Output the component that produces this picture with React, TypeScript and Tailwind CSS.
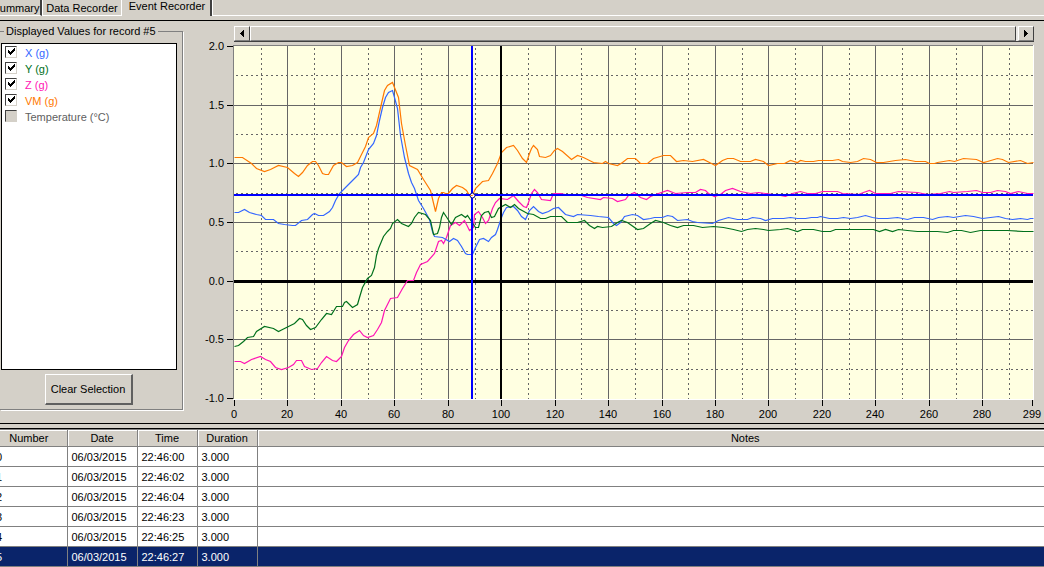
import { useState } from 'react'

const channels = [
  { id: 'x', label: 'X (g)', color: 'text-[#3366ff]', disabled: false },
  { id: 'y', label: 'Y (g)', color: 'text-[#00701c]', disabled: false },
  { id: 'z', label: 'Z (g)', color: 'text-[#ff14b4]', disabled: false },
  { id: 'vm', label: 'VM (g)', color: 'text-[#ff7800]', disabled: false },
  { id: 'temp', label: 'Temperature (°C)', color: 'text-[#606060]', disabled: true },
]

const records = [
  { number: '0', date: '06/03/2015', time: '22:46:00', duration: '3.000' },
  { number: '1', date: '06/03/2015', time: '22:46:02', duration: '3.000' },
  { number: '2', date: '06/03/2015', time: '22:46:04', duration: '3.000' },
  { number: '3', date: '06/03/2015', time: '22:46:23', duration: '3.000' },
  { number: '4', date: '06/03/2015', time: '22:46:25', duration: '3.000' },
  { number: '5', date: '06/03/2015', time: '22:46:27', duration: '3.000' },
]

// curves in plot units, 799 wide and 353 high
const curves = [
  {
    id: 'z',
    stroke: '#ff14b4',
    points:
      '0,315 6,315 10,317 17,313 26,310 31,313 36,315 41,321 47,323 54,321 59,318 62,314 67,314 70,320 77,323 83,322 87,316 92,310 98,314 102,315 107,310 110,301 114,294 119,288 125,284 129,289 133,291 139,289 143,283 147,276 150,264 156,252 163,251 168,242 173,234 179,234 182,226 186,218 193,215 200,207 204,195 207,194 209,197 212,191 216,179 221,176 225,179 230,174 233,180 235,184 239,181 240,168 244,165 248,171 251,177 254,174 258,162 261,156 265,152 273,153 279,149 284,155 289,160 292,161 294,156 297,147 300,143 303,146 307,153 316,154 319,147 326,147 336,149 344,148 353,151 366,153 369,151 378,152 383,155 391,153 394,149 400,146 406,151 412,153 416,150 424,147 433,144 441,147 453,146 461,146 466,143 471,144 474,147 480,150 486,148 491,144 498,142 506,145 516,147 524,146 531,147 546,149 551,150 558,147 566,145 573,147 581,147 588,145 603,145 608,147 624,148 629,146 635,144 641,147 656,147 664,145 683,146 693,148 706,147 715,145 719,146 733,145 742,144 748,146 756,146 763,144 771,145 776,147 784,145 793,147 799,147',
  },
  {
    id: 'x',
    stroke: '#3366ff',
    points:
      '0,166 4,166 10,163 15,166 22,168 27,169 31,173 39,173 44,177 50,178 58,179 61,179 67,174 73,173 78,168 80,167 84,169 89,169 95,165 98,161 101,154 105,147 113,139 121,131 124,128 126,121 129,116 134,103 139,97 142,89 145,74 148,61 151,51 154,46 158,44 160,51 163,62 166,89 170,111 174,127 177,136 180,142 184,154 189,162 195,173 198,185 200,190 208,191 215,195 219,192 223,194 227,200 231,207 233,208 238,208 241,201 245,193 249,192 254,195 257,191 261,188 263,183 267,171 269,166 272,161 279,160 283,164 287,170 291,173 295,164 299,160 304,165 308,167 314,165 319,162 324,161 331,168 339,170 343,168 356,169 364,170 374,171 379,177 382,179 386,176 390,170 398,168 403,169 409,173 416,172 420,171 428,171 433,169 438,170 443,174 453,173 458,175 463,176 478,177 484,174 494,171 503,173 513,173 518,171 526,172 531,174 538,172 549,172 556,171 563,172 571,172 577,171 583,171 586,170 595,172 603,172 609,171 616,172 623,171 631,169 638,171 644,172 653,172 663,171 673,173 680,171 689,171 698,173 704,171 713,170 719,171 731,169 739,170 748,172 756,171 764,170 771,172 778,173 786,172 793,173 796,172 799,172',
  },
  {
    id: 'y',
    stroke: '#00701c',
    points:
      '0,300 4,299 9,295 13,291 19,290 22,285 30,280 39,282 44,285 48,283 54,280 60,277 65,272 68,273 72,279 76,283 81,281 87,273 92,267 97,268 102,260 108,260 110,256 112,255 118,261 123,258 125,251 128,241 133,232 137,229 140,221 142,209 144,202 149,190 153,185 156,182 158,177 163,173 167,177 174,180 177,177 180,171 184,166 191,168 196,174 199,188 203,187 205,181 207,171 209,166 213,172 217,178 221,171 227,168 231,171 233,169 237,175 241,181 244,181 247,169 250,166 254,165 257,171 260,170 264,162 271,158 276,161 280,158 284,162 293,167 299,168 306,172 311,172 316,170 327,170 333,176 343,176 350,174 355,179 360,182 363,180 368,181 377,180 383,176 387,174 393,176 403,183 409,182 416,177 421,174 429,176 436,179 443,181 449,179 459,179 468,181 479,180 489,181 499,183 507,185 513,183 521,182 529,183 534,184 546,183 553,182 563,185 568,183 579,183 588,185 596,185 601,183 609,183 616,183 628,183 639,183 645,185 651,183 658,185 664,183 673,184 683,185 703,185 713,186 719,184 727,184 736,186 746,184 773,184 789,185 799,185',
  },
  {
    id: 'vm',
    stroke: '#ff7800',
    points:
      '0,111 8,111 17,117 22,122 30,125 36,123 44,119 53,121 60,127 64,130 68,126 73,119 78,115 81,115 84,119 88,127 91,128 94,128 99,119 104,116 107,116 112,120 118,119 123,116 126,110 131,100 134,91 139,87 142,79 147,57 150,44 153,39 158,36 160,41 164,51 167,77 171,99 175,119 183,123 189,133 196,144 201,165 204,152 207,146 209,146 213,148 218,142 222,139 228,141 232,144 235,149 238,149 241,142 248,135 254,134 258,127 263,117 267,106 272,101 279,99 283,104 288,112 292,116 295,107 297,102 299,99 303,103 305,110 311,111 316,109 320,104 323,102 328,105 337,113 343,109 349,111 359,116 368,117 371,115 374,117 383,119 388,116 393,112 401,112 406,117 413,117 419,112 429,109 436,109 442,115 449,114 458,115 469,113 475,116 481,119 488,114 493,112 499,112 506,115 516,115 521,113 529,115 534,119 543,117 550,117 556,114 563,116 566,114 571,115 579,115 584,114 598,114 604,113 608,115 616,116 623,115 629,112 636,113 642,116 649,116 661,114 671,113 681,115 691,115 695,117 700,117 703,116 715,114 720,115 729,112 742,113 749,116 753,115 763,112 768,113 774,116 786,114 793,117 799,116',
  },
]

const PLOT_W = 799
const PLOT_H = 353
const xTicks = [0, 20, 40, 60, 80, 100, 120, 140, 160, 180, 200, 220, 240, 260, 280, 299]
const xMinor = [10, 30, 50, 70, 90, 110, 130, 150, 170, 190, 210, 230, 250, 270, 290]
const yTicks = [2, 1.5, 1, 0.5, 0, -0.5, -1]
const yMinor = [1.75, 1.25, 0.75, 0.25, -0.25, -0.75]

const toX = (sample: number) => Math.round((sample * PLOT_W) / 299)
const toY = (g: number) => Math.round(((2 - g) * 352) / 3)

const EventChart = ({ visible }: { visible: string[] }) => {
  return (
    <svg
      viewBox="0 0 861 381"
      className="block w-full text-[11px]"
      role="img"
      aria-label="Acceleration in g by sample"
    >
      <g transform="translate(51 4)">
        <g shapeRendering="crispEdges">
          <rect x="-1" y="-1" width="801" height="355" fill="#fff" />
          <rect x="-1" y="-1" width="800" height="354" fill="#808080" />
          <rect x="0" y="0" width={PLOT_W} height={PLOT_H} fill="#ffffe1" />

          {yMinor.map((g) => (
            <path
              key={g}
              d={`M2 ${toY(g) + 0.5}H${PLOT_W}`}
              stroke="#666"
              strokeDasharray="2 3"
            />
          ))}
          {xMinor.map((s) => (
            <path
              key={s}
              d={`M${toX(s) + 0.5} 2V${PLOT_H}`}
              stroke="#666"
              strokeDasharray="2 3"
            />
          ))}
          {yTicks.slice(1, -1).map((g) => (
            <path key={g} d={`M0 ${toY(g) + 0.5}H${PLOT_W}`} stroke="#666" />
          ))}
          {xTicks.slice(1, -1).map((s) => (
            <path key={s} d={`M${toX(s) + 0.5} 0V${PLOT_H}`} stroke="#666" />
          ))}

          <rect x="0" y="234" width={PLOT_W} height="3" fill="#000" />
        </g>

        {curves
          .filter((c) => visible.includes(c.id))
          .map((c) => (
            <polyline
              key={c.id}
              points={c.points}
              transform="translate(0.5 0.5)"
              fill="none"
              stroke={c.stroke}
              strokeWidth="1.2"
            />
          ))}

        <g shapeRendering="crispEdges">
          <rect x="266" y="0" width="2" height={PLOT_H} fill="#000" />
          <rect x="237" y="0" width="2" height={PLOT_H} fill="#00f" />
          <rect x="0" y="148" width={PLOT_W} height="2" fill="#00f" />
        </g>
        <circle cx="238.5" cy="149.5" r="2.5" fill="#fff" stroke="#000080" />
        <path d="M236.5 149.5h2l1-1" stroke="#ff7800" fill="none" />

        {yTicks.map((g) => (
          <g key={g}>
            <path d={`M-7 ${toY(g) + 0.5}h6`} stroke="#000" shapeRendering="crispEdges" />
            <text x="-10" y={toY(g) + 4} textAnchor="end">
              {g.toFixed(1)}
            </text>
          </g>
        ))}
        {xTicks.map((s) => (
          <g key={s}>
            <path
              d={`M${Math.min(toX(s), 798) + 0.5} 354v6`}
              stroke="#000"
              shapeRendering="crispEdges"
            />
            <text x={Math.min(toX(s), 798)} y="372" textAnchor="middle">
              {s}
            </text>
          </g>
        ))}
      </g>
    </svg>
  )
}

const ScrollBar = () => {
  return (
    <div className="ml-[51px] mr-[10px] flex h-4 border-b border-[#404040]">
      <button
        type="button"
        aria-label="Scroll left"
        className="flex w-4 items-center justify-center border border-b-[#808080] border-l-white border-r-[#404040] border-t-white bg-[#d4d0c8]"
      >
        <svg viewBox="0 0 4 7" className="h-[7px] w-1" shapeRendering="crispEdges">
          <path d="M4 0v7L0 3.5z" />
        </svg>
      </button>
      <div className="flex-1 border border-b-[#808080] border-l-white border-r-[#404040] border-t-white" />
      <div className="w-0.5 bg-[#eae8e4]" />
      <button
        type="button"
        aria-label="Scroll right"
        className="flex w-4 items-center justify-center border border-b-[#808080] border-l-white border-r-[#404040] border-t-white bg-[#d4d0c8]"
      >
        <svg viewBox="0 0 4 7" className="h-[7px] w-1" shapeRendering="crispEdges">
          <path d="M0 0v7L4 3.5z" />
        </svg>
      </button>
    </div>
  )
}

const Tabs = () => {
  return (
    <div role="tablist" className="-ml-2 flex h-4 items-stretch leading-[14px]">
      <button
        type="button"
        role="tab"
        aria-selected="false"
        className="w-[50px] border-b border-r-2 border-b-white border-r-[#404040] text-center"
      >
        Summary
      </button>
      <button
        type="button"
        role="tab"
        aria-selected="false"
        className="w-[80px] border-b border-l border-r border-white text-center"
      >
        Data Recorder
      </button>
      <button
        type="button"
        role="tab"
        aria-selected="true"
        className="w-[90px] border-r-2 border-[#404040] pb-1 pl-0.5 text-center leading-[12px]"
      >
        Event Recorder
      </button>
      <div className="flex-1 border-b border-l border-white" />
    </div>
  )
}

const App = () => {
  const [visible, setVisible] = useState(['x', 'y', 'z', 'vm'])
  const [selected, setSelected] = useState('5')

  const toggle = (id: string) => {
    setVisible((prev) =>
      prev.includes(id) ? prev.filter((v) => v !== id) : [...prev, id]
    )
  }

  return (
    <div className="min-h-screen w-full overflow-hidden bg-[#d4d0c8] font-['Liberation_Sans',Arial,sans-serif] text-[11px] text-black">
      <Tabs />

      <main className="mt-1 flex items-start border-t border-black">
        <fieldset className="mt-0.5 w-[183px] shrink-0 border border-l-0 border-[#808080] pr-[5px] shadow-[1px_1px_0_#fff]">
          <legend className="ml-1 px-0.5 leading-4">
            Displayed Values for record #5
          </legend>
          <div className="ml-px mt-1 h-[327px] border border-black bg-white pl-[3px]">
            {channels.map((ch) => (
              <label
                key={ch.id}
                className={`flex h-4 items-center gap-2 ${ch.color}`}
              >
                <span className="relative h-3 w-3">
                  <input
                    type="checkbox"
                    checked={visible.includes(ch.id)}
                    disabled={ch.disabled}
                    onChange={() => toggle(ch.id)}
                    className="block h-3 w-3 appearance-none border border-b-[#d4d0c8] border-l-[#404040] border-r-[#d4d0c8] border-t-[#404040] bg-white disabled:bg-[#d4d0c8]"
                  />
                  {visible.includes(ch.id) && (
                    <svg
                      viewBox="0 0 7 7"
                      className="pointer-events-none absolute left-[3px] top-[2px] h-[7px] w-[7px]"
                      shapeRendering="crispEdges"
                    >
                      <path d="M0 2h1v1h1v1h1V3h1V2h1V1h1V0h1v3H6v1H5v1H4v1H3v1H2V6H1V5H0z" fill="#000" />
                    </svg>
                  )}
                </span>
                <span className="pt-0.5">{ch.label}</span>
              </label>
            ))}
          </div>
          <div className="flex justify-center pb-1 pt-1">
            <button
              type="button"
              onClick={() => setVisible([])}
              className="h-[31px] w-[88px] border-b-2 border-l border-r-2 border-t border-b-[#606060] border-l-white border-r-[#606060] border-t-white"
            >
              Clear Selection
            </button>
          </div>
        </fieldset>

        <section className="min-w-0 flex-1 pt-[5px]">
          <ScrollBar />
          <EventChart visible={visible} />
        </section>
      </main>

      <div className="h-1.5 border-y border-black" />

      {/* the notes column runs on past the right edge of the window */}
      <table className="-ml-[9px] w-[calc(100%+199px)] table-fixed border-collapse border-t border-[#808080]">
        <colgroup>
          <col className="w-[76px]" />
          <col className="w-[70px]" />
          <col className="w-[60px]" />
          <col className="w-[60px]" />
          <col />
        </colgroup>
        <thead>
          <tr className="h-[17px] border-b border-[#808080]">
            {['Number', 'Date', 'Time', 'Duration', 'Notes'].map((h) => (
              <th
                key={h}
                className="border-r border-[#808080] p-0 font-normal leading-[16px] shadow-[inset_1px_1px_0_#fff]"
              >
                {h}
              </th>
            ))}
          </tr>
        </thead>
        <tbody>
          {records.map((r) => (
            <tr
              key={r.number}
              onClick={() => setSelected(r.number)}
              className={`h-5 border-b border-[#808080] ${
                selected === r.number ? 'bg-[#0a246a] text-white' : 'bg-white'
              }`}
            >
              <td className="border-r border-[#808080] pb-0 pl-[5px] pt-px">{r.number}</td>
              <td className="border-r border-[#808080] px-1 pb-0 pt-px">{r.date}</td>
              <td className="border-r border-[#808080] px-1 pb-0 pt-px">{r.time}</td>
              <td className="border-r border-[#808080] px-1 pb-0 pt-px">{r.duration}</td>
              <td className="p-0" />
            </tr>
          ))}
        </tbody>
      </table>
    </div>
  )
}

export default App
